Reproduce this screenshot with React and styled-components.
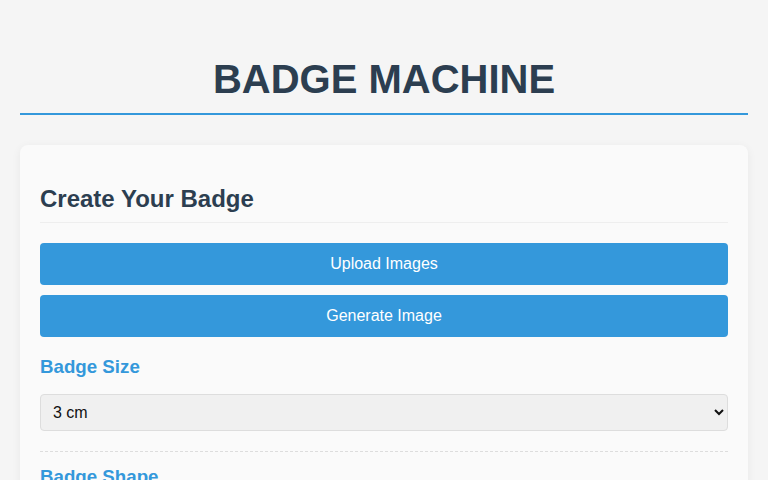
import React, { useState } from 'react';
import styled, { createGlobalStyle } from 'styled-components';

const GlobalStyle = createGlobalStyle`
  * {
    box-sizing: border-box;
  }
  body {
    margin: 0;
    background: #f5f5f5;
    font-family: "Liberation Sans", Arial, Helvetica, sans-serif;
    color: #333;
  }
`;

const Page = styled.div`
  padding: 0 20px 20px;
`;

const Header = styled.header`
  padding: 57px 0 11px;
  border-bottom: 2px solid #3498db;
  margin-bottom: 30px;
  text-align: center;
`;

const Title = styled.h1`
  margin: 0;
  font-size: 40px;
  font-weight: bold;
  color: #2c3e50;
`;

const Card = styled.section`
  background: #fafafa;
  border-radius: 8px;
  box-shadow: 0 2px 10px rgba(0, 0, 0, 0.06);
  padding: 20px;
`;

const CardTitle = styled.h2`
  margin: 20px 0 20px;
  padding-bottom: 9px;
  border-bottom: 1px solid #eee;
  font-size: 24px;
  color: #2c3e50;
`;

const Actions = styled.div`
  display: flex;
  flex-direction: column;
  gap: 10px;
`;

const Button = styled.button`
  width: 100%;
  padding: 12px;
  border: none;
  border-radius: 4px;
  background: #3498db;
  color: #fff;
  font-family: inherit;
  font-size: 16px;
  line-height: 18px;
  cursor: pointer;

  &:hover {
    background: #2980b9;
  }
`;

const OptionGroup = styled.div`
  margin-top: ${({ $first }) => ($first ? '19px' : '14px')};
  padding-bottom: 20px;
  border-bottom: 1px dashed #ddd;
`;

const OptionTitle = styled.h3`
  margin: 0 0 16px;
  font-size: 18.72px;
  color: #3498db;
`;

const Select = styled.select`
  width: 100%;
  padding: 8px;
  border: 1px solid #ddd;
  border-radius: 4px;
  background: #f0f0f0;
  font-family: inherit;
  font-size: 16px;
  color: #111;
`;

export default function App() {
  const [size, setSize] = useState('3');
  const [shape, setShape] = useState('circle');

  return (
    <>
      <GlobalStyle />
      <Page>
        <Header>
          <Title>BADGE MACHINE</Title>
        </Header>

        <Card>
          <CardTitle>Create Your Badge</CardTitle>

          <Actions>
            <Button>Upload Images</Button>
            <Button>Generate Image</Button>
          </Actions>

          <OptionGroup $first>
            <OptionTitle>Badge Size</OptionTitle>
            <Select value={size} onChange={e => setSize(e.target.value)}>
              <option value="3">3 cm</option>
              <option value="4">4 cm</option>
              <option value="5">5 cm</option>
            </Select>
          </OptionGroup>

          <OptionGroup>
            <OptionTitle>Badge Shape</OptionTitle>
            <Select value={shape} onChange={e => setShape(e.target.value)}>
              <option value="circle">Circle</option>
              <option value="square">Square</option>
            </Select>
          </OptionGroup>
        </Card>
      </Page>
    </>
  );
}
